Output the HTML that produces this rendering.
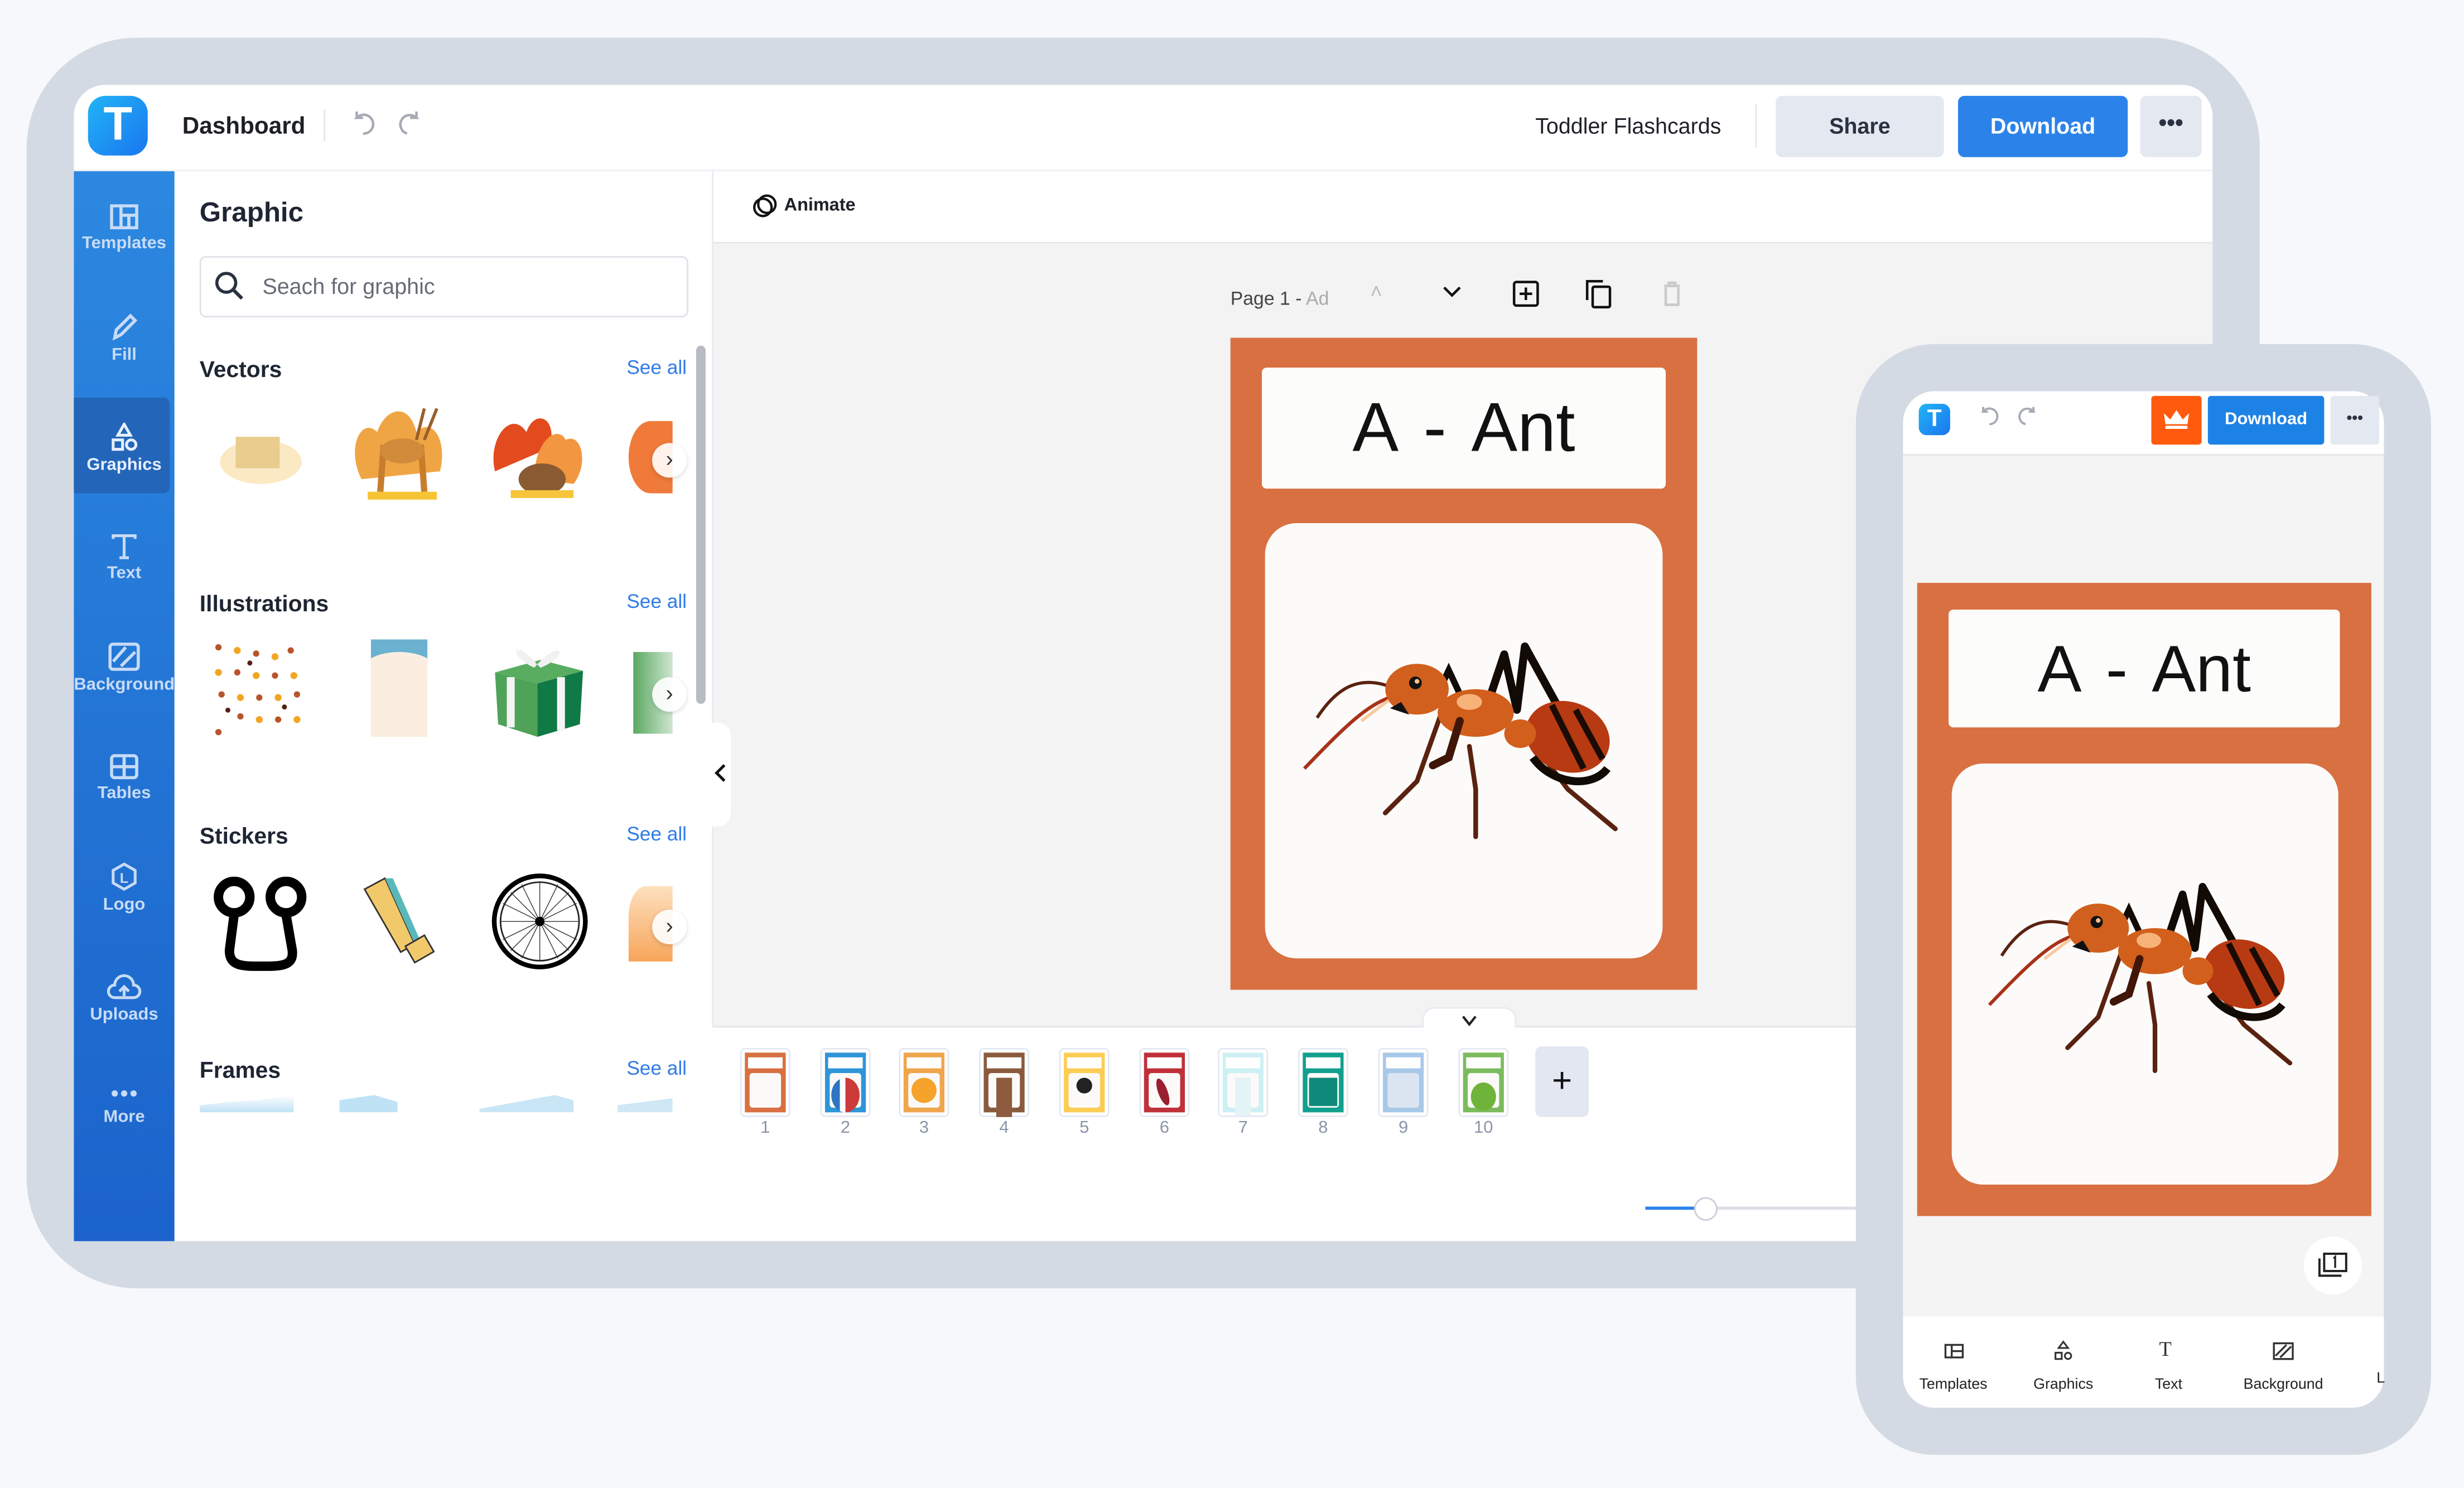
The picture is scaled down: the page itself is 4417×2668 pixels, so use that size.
<!DOCTYPE html>
<html><head><meta charset="utf-8"><style>
*{margin:0;padding:0;box-sizing:border-box}
html,body{width:4417px;height:2667px;overflow:hidden;background:#f6f8fb;font-family:"Liberation Sans",sans-serif}
#w{position:absolute;left:0;top:0;width:1568px;height:947px;transform:scale(2.817);transform-origin:0 0}
.a{position:absolute}
.sb{position:absolute;left:47px;width:64px;text-align:center;color:#c7dbf6;font-size:11px;font-weight:bold}
.sb svg{display:block;margin:0 auto 3px}
.h{position:absolute;left:127px;font-size:14.5px;font-weight:bold;color:#1e2533}
.see{position:absolute;right:1131px;font-size:12.5px;color:#2f7be8}
.arr{position:absolute;width:22px;height:22px;border-radius:50%;background:rgba(255,255,255,.9);box-shadow:0 1px 3px rgba(0,0,0,.15);font-size:14px;line-height:21px;text-align:center;color:#333}
.th{position:absolute;top:667px;width:32px;height:44px;border:1px solid #e3e8f2;border-radius:3px;padding:2px}
.th .c{width:100%;height:100%;position:relative}
.th .t{position:absolute;left:2px;right:2px;top:3px;height:7px;background:#fff;font-size:3px;text-align:center}
.th .i{position:absolute;left:3px;right:3px;top:13px;bottom:3px;background:#fbfaf8;border-radius:2px}
.num{position:absolute;top:712px;width:32px;text-align:center;font-size:11px;color:#8a94a8}
.pn{position:absolute;top:852px;text-align:center;font-size:9.5px;color:#222}
.ttl{text-align:center;color:#111;word-spacing:6px;font-family:"Liberation Sans",sans-serif}
</style></head><body><div id="w">
<svg width="0" height="0" style="position:absolute"><defs>
<g id="ant">
<path d="M62 32 C40 22 25 30 12 50" stroke="#5a2210" stroke-width="2" fill="none"/>
<path d="M62 36 C45 40 30 55 4 82" stroke="#a8321a" stroke-width="2.2" fill="none"/>
<path d="M62 36 C55 40 48 46 40 52" stroke="#f8c9a0" stroke-width="2" fill="none"/>
<path d="M90 48 L75 90 L55 110" stroke="#5a2210" stroke-width="3" fill="none" stroke-linecap="round"/>
<path d="M108 68 L112 95 L112 125" stroke="#5a2210" stroke-width="3" fill="none" stroke-linecap="round"/>
<path d="M145 62 L170 95 L200 120" stroke="#5a2210" stroke-width="3" fill="none" stroke-linecap="round"/>
<path d="M120 40 L130 10 L138 45 L143 5 L165 45" stroke="#120a05" stroke-width="5" fill="none" stroke-linejoin="round"/>
<path d="M88 35 L95 20 L102 35" stroke="#120a05" stroke-width="4" fill="none"/>
<ellipse cx="170" cy="62" rx="27" ry="22" fill="#b83a12" transform="rotate(20 170 62)"/>
<path d="M160 42 L180 82 M175 45 L192 76" stroke="#1a0b05" stroke-width="4"/>
<path d="M148 75 C160 92 185 95 195 82" stroke="#120a05" stroke-width="5" fill="none"/>
<ellipse cx="112" cy="47" rx="24" ry="15" fill="#d25f1c"/>
<ellipse cx="140" cy="60" rx="10" ry="9" fill="#d25f1c"/>
<ellipse cx="108" cy="40" rx="8" ry="5" fill="#f7b27a"/>
<ellipse cx="75" cy="32" rx="20" ry="16" fill="#d1601e"/>
<circle cx="74" cy="28" r="4" fill="#111"/><circle cx="75" cy="27" r="1.5" fill="#f6c08a"/>
<path d="M58 44 L65 40 L70 48 Z" fill="#111"/>
<path d="M102 52 L95 75 L85 80" stroke="#3f1608" stroke-width="5" fill="none" stroke-linecap="round"/>
</g>
</defs></svg>

<div class="a" style="left:17px;top:24px;width:1421px;height:796px;background:#d4dae4;border-radius:70px"></div>
<div class="a" style="left:47px;top:54px;width:1361px;height:736px;background:#fff;border-radius:20px 20px 0 0"></div>
<div class="a" style="left:56px;top:61px;width:38px;height:38px;border-radius:11px;background:linear-gradient(135deg,#22b4f5,#1a76ef);color:#fff;font-size:30px;font-weight:bold;text-align:center;line-height:38px">T</div>
<div class="a" style="left:116px;top:72px;font-size:15px;font-weight:bold;color:#1e2027">Dashboard</div>
<div class="a" style="left:206px;top:70px;width:1px;height:20px;background:#e3e6ec"></div>
<svg class="a" style="left:217px;top:70px" width="60" height="20"><path d="M14 15 A6 6 0 1 0 10 5 L14 5 M10 5 L10 1" stroke="#a6abb4" stroke-width="1.6" fill="none"/><path d="M42 15 A6 6 0 1 1 48 5 L44 5 M48 5 L48 1" stroke="#a6abb4" stroke-width="1.6" fill="none"/></svg>
<div class="a" style="left:977px;top:72px;font-size:14px;color:#1e2027">Toddler Flashcards</div>
<div class="a" style="left:1117px;top:66px;width:1px;height:28px;background:#e3e6ec"></div>
<div class="a" style="left:1130px;top:61px;width:107px;height:39px;border-radius:4px;background:#e3e8f1;color:#2a3140;font-size:14px;font-weight:bold;text-align:center;line-height:39px">Share</div>
<div class="a" style="left:1246px;top:61px;width:108px;height:39px;border-radius:4px;background:#2b83ea;color:#fff;font-size:14px;font-weight:bold;text-align:center;line-height:39px">Download</div>
<div class="a" style="left:1362px;top:61px;width:39px;height:39px;border-radius:4px;background:#e3e8f1;color:#2a3140;font-size:15px;font-weight:bold;text-align:center;line-height:36px">•••</div>
<div class="a" style="left:47px;top:108px;width:1361px;height:1px;background:#edf0f4"></div>

<div class="a" style="left:47px;top:109px;width:64px;height:681px;background:linear-gradient(#2c88e0,#1b63cb)"></div>
<div class="a" style="left:47px;top:253px;width:61px;height:61px;background:#2366b9;border-radius:0 4px 4px 0"></div>
<div class="sb" style="top:130px"><svg width="18" height="16"><rect x="1" y="1" width="16" height="14" fill="none" stroke="#c7dbf6" stroke-width="2"/><path d="M7 1V15M7 7H17M12 7V15" stroke="#c7dbf6" stroke-width="2"/></svg>Templates</div>
<div class="sb" style="top:199px"><svg width="18" height="18"><path d="M3 16 L4 11 L13 2 L16 5 L7 14 Z" fill="none" stroke="#c7dbf6" stroke-width="2"/></svg>Fill</div>
<div class="sb" style="top:269px;color:#e6efff"><svg width="18" height="18"><path d="M9 1 L13 8 H5 Z" fill="none" stroke="#e6efff" stroke-width="1.8"/><rect x="2" y="11" width="6" height="6" fill="none" stroke="#e6efff" stroke-width="1.8"/><circle cx="13.5" cy="14" r="3" fill="none" stroke="#e6efff" stroke-width="1.8"/></svg>Graphics</div>
<div class="sb" style="top:340px"><svg width="18" height="16"><path d="M2 3 V1 H16 V3 M9 1 V15 M6 15 H12" stroke="#c7dbf6" stroke-width="1.8" fill="none"/></svg>Text</div>
<div class="sb" style="top:409px"><svg width="20" height="18"><rect x="1" y="1" width="18" height="16" rx="2" fill="none" stroke="#c7dbf6" stroke-width="2"/><path d="M3 12 L11 3 M8 15 L17 6" stroke="#c7dbf6" stroke-width="2"/></svg>Background</div>
<div class="sb" style="top:480px"><svg width="18" height="16"><rect x="1" y="1" width="16" height="14" rx="2" fill="none" stroke="#c7dbf6" stroke-width="2"/><path d="M1 8 H17 M9 1 V15" stroke="#c7dbf6" stroke-width="2"/></svg>Tables</div>
<div class="sb" style="top:549px"><svg width="18" height="18"><path d="M9 1 L16 5 V13 L9 17 L2 13 V5 Z" fill="none" stroke="#c7dbf6" stroke-width="1.8"/><text x="9" y="13" font-size="9" text-anchor="middle" fill="#c7dbf6" font-weight="bold" font-family="Liberation Sans">L</text></svg>Logo</div>
<div class="sb" style="top:620px"><svg width="22" height="17"><path d="M5 15 A4 4 0 0 1 5 7 A6 6 0 0 1 17 7 A4 4 0 0 1 17 15 Z" fill="none" stroke="#c7dbf6" stroke-width="1.8"/><path d="M11 14 V8 M8 11 L11 8 L14 11" stroke="#c7dbf6" stroke-width="1.8" fill="none"/></svg>Uploads</div>
<div class="sb" style="top:690px"><svg width="18" height="12"><circle cx="3" cy="6" r="2" fill="#c7dbf6"/><circle cx="9" cy="6" r="2" fill="#c7dbf6"/><circle cx="15" cy="6" r="2" fill="#c7dbf6"/></svg>More</div>

<div class="a" style="left:453px;top:109px;width:1px;height:545px;background:#e8ebf0"></div>
<div class="a" style="left:127px;top:125px;font-size:17.5px;font-weight:bold;color:#1e2533">Graphic</div>
<div class="a" style="left:127px;top:163px;width:311px;height:39px;border:1px solid #dfe2e8;border-radius:4px"></div>
<svg class="a" style="left:136px;top:172px" width="20" height="20"><circle cx="8" cy="8" r="6" fill="none" stroke="#2a3140" stroke-width="2"/><path d="M12.5 12.5 L18 18" stroke="#2a3140" stroke-width="2.2"/></svg>
<div class="a" style="left:167px;top:174px;font-size:14px;color:#666b75">Seach for graphic</div>
<div class="a" style="left:443px;top:220px;width:6px;height:228px;border-radius:3px;background:#b8bbc3"></div>

<div class="h" style="top:228px">Vectors</div><div class="see" style="top:227px">See all</div>
<div class="a" style="left:140px;top:280px;width:52px;height:28px;border-radius:50%;background:#fbe9c4"></div>
<div class="a" style="left:150px;top:278px;width:28px;height:20px;background:#e8cd8e"></div>
<svg class="a" style="left:220px;top:255px" width="70" height="65"><path d="M10 50 C0 30 10 10 20 20 C25 5 40 0 45 20 C55 10 65 25 60 45 Z" fill="#f0a545"/><path d="M22 58 L24 30 L48 30 L50 58" stroke="#c77e2c" stroke-width="4" fill="none"/><ellipse cx="36" cy="32" rx="14" ry="8" fill="#d18b3b"/><path d="M45 25 L50 5 M50 25 L58 5" stroke="#9b5f2a" stroke-width="2"/><rect x="14" y="58" width="44" height="5" fill="#f7c436"/></svg>
<svg class="a" style="left:310px;top:260px" width="65" height="60"><path d="M5 40 C0 20 15 0 25 15 C30 0 45 5 40 25 Z" fill="#e34b1f"/><path d="M30 45 C30 20 45 10 50 20 C60 15 65 35 55 48 Z" fill="#f2963f"/><ellipse cx="35" cy="45" rx="15" ry="10" fill="#8a5a32"/><rect x="15" y="52" width="40" height="5" fill="#f6c53b"/></svg>
<div class="a" style="left:400px;top:268px;width:28px;height:46px;border-radius:50% 0 0 50%;background:#ef7a3a"></div>
<div class="arr" style="left:415px;top:282px">›</div>

<div class="h" style="top:377px">Illustrations</div><div class="see" style="top:376px">See all</div>
<svg class="a" style="left:133px;top:408px" width="64" height="60"><g fill="#b8542a"><circle cx="6" cy="4" r="2"/><circle cx="30" cy="8" r="2"/><circle cx="52" cy="6" r="2"/><circle cx="18" cy="20" r="2"/><circle cx="42" cy="22" r="2"/><circle cx="8" cy="34" r="2"/><circle cx="32" cy="36" r="2"/><circle cx="56" cy="34" r="2"/><circle cx="20" cy="48" r="2"/><circle cx="44" cy="50" r="2"/><circle cx="6" cy="58" r="2"/></g><g fill="#f2a522"><circle cx="18" cy="6" r="2.2"/><circle cx="42" cy="10" r="2.2"/><circle cx="6" cy="20" r="2.2"/><circle cx="30" cy="22" r="2.2"/><circle cx="54" cy="22" r="2.2"/><circle cx="20" cy="36" r="2.2"/><circle cx="44" cy="36" r="2.2"/><circle cx="32" cy="50" r="2.2"/><circle cx="56" cy="50" r="2.2"/></g><g fill="#5a1e14"><circle cx="26" cy="14" r="1.6"/><circle cx="48" cy="42" r="1.6"/><circle cx="12" cy="44" r="1.6"/></g></svg>
<div class="a" style="left:236px;top:407px;width:36px;height:62px;background:#fbeee0;overflow:hidden"><div style="height:14px;background:#6bb2d0"></div><div style="position:absolute;left:-6px;top:8px;width:48px;height:24px;border-radius:50%;background:#fbeee0"></div></div>
<svg class="a" style="left:312px;top:405px" width="62" height="65"><path d="M3 23 L30 30 L30 64 L5 56 Z" fill="#4ea358"/><path d="M30 30 L59 22 L57 56 L30 64 Z" fill="#0f7a45"/><path d="M3 23 L32 15 L59 22 L30 30 Z" fill="#58ad60"/><path d="M13 26 L13 58 M45 26 L45 60" stroke="#f4f4f4" stroke-width="5"/><path d="M30 18 C15 0 10 12 28 20 C45 0 52 12 32 20" fill="#f1f1f1"/></svg>
<div class="a" style="left:403px;top:415px;width:25px;height:52px;background:linear-gradient(90deg,#5aa862,#cfe6d1)"></div>
<div class="arr" style="left:415px;top:431px">›</div>

<div class="h" style="top:525px">Stickers</div><div class="see" style="top:524px">See all</div>
<svg class="a" style="left:134px;top:555px" width="64" height="64"><circle cx="15" cy="16" r="10" fill="none" stroke="#000" stroke-width="6"/><circle cx="48" cy="16" r="10" fill="none" stroke="#000" stroke-width="6"/><path d="M15 27 L12 50 C12 60 20 60 32 60 C45 60 53 60 52 50 L48 27" fill="none" stroke="#000" stroke-width="6"/></svg>
<svg class="a" style="left:230px;top:556px" width="55" height="62"><path d="M2 10 L15 3 L34 45 L25 50 Z" fill="#f2c96a" stroke="#333" stroke-width="1"/><path d="M15 3 L20 3 L38 44 L34 45 Z" fill="#5ab8b9"/><rect x="30" y="42" width="14" height="12" transform="rotate(-30 37 48)" fill="#f2c96a" stroke="#333" stroke-width="1"/></svg>
<svg class="a" style="left:312px;top:555px" width="63" height="63"><circle cx="31.5" cy="31.5" r="29" fill="#fff" stroke="#000" stroke-width="3"/><circle cx="31.5" cy="31.5" r="25" fill="none" stroke="#222" stroke-width="1"/><g stroke="#333" stroke-width=".5"><path d="M31.5 6V57M6 31.5H57M13 13L50 50M50 13L13 50M20 8L43 55M43 8L20 55M8 20L55 43M8 43L55 20"/></g><circle cx="31.5" cy="31.5" r="3" fill="#000"/></svg>
<div class="a" style="left:400px;top:564px;width:28px;height:48px;background:linear-gradient(#fde0bf,#f7a55a);border-radius:40% 0 0 0"></div>
<div class="arr" style="left:415px;top:579px">›</div>

<div class="h" style="top:674px">Frames</div><div class="see" style="top:673px">See all</div>
<div class="a" style="left:127px;top:697px;width:60px;height:11px;background:linear-gradient(#fff,#bfe2f5);clip-path:polygon(0 60%,30% 40%,60% 30%,100% 0,100% 100%,0 100%)"></div>
<div class="a" style="left:216px;top:697px;width:37px;height:11px;background:#bfe2f5;clip-path:polygon(0 30%,60% 0,100% 40%,100% 100%,0 100%)"></div>
<div class="a" style="left:305px;top:697px;width:60px;height:11px;background:#c8e6f6;clip-path:polygon(0 80%,40% 40%,80% 0,100% 30%,100% 100%,0 100%)"></div>
<div class="a" style="left:393px;top:699px;width:35px;height:9px;background:#cfe8f6;clip-path:polygon(0 50%,100% 0,100% 100%,0 100%)"></div>

<div class="a" style="left:454px;top:155px;width:954px;height:498px;background:#f3f3f3"></div>
<div class="a" style="left:454px;top:154px;width:954px;height:1px;background:#e6e6e6"></div>
<svg class="a" style="left:478px;top:123px" width="18" height="16"><circle cx="10" cy="7" r="5.5" fill="none" stroke="#111" stroke-width="1.5"/><circle cx="7.5" cy="9" r="5.5" fill="none" stroke="#111" stroke-width="1.5"/></svg>
<div class="a" style="left:499px;top:125px;font-size:11.5px;font-weight:bold;color:#1e2027">Animate</div>
<div class="a" style="left:783px;top:183px;font-size:12px;color:#444">Page 1 - <span style="color:#aaa">Ad</span></div>
<div class="a" style="left:872px;top:178px;font-size:13px;color:#bbb">˄</div>
<svg class="a" style="left:917px;top:181px" width="14" height="10"><path d="M2 2 L7 7 L12 2" stroke="#111" stroke-width="1.6" fill="none"/></svg>
<svg class="a" style="left:962px;top:178px" width="18" height="18"><rect x="1.5" y="1.5" width="15" height="15" rx="1.5" fill="none" stroke="#111" stroke-width="1.6"/><path d="M9 5V13M5 9H13" stroke="#111" stroke-width="1.6"/></svg>
<svg class="a" style="left:1008px;top:177px" width="18" height="20"><path d="M2 14 V2 H12" stroke="#111" stroke-width="1.6" fill="none"/><rect x="5.5" y="5.5" width="11" height="13" rx="1" fill="none" stroke="#111" stroke-width="1.6"/></svg>
<svg class="a" style="left:1057px;top:178px" width="14" height="18"><path d="M2 4H12M5 4V2H9V4M3 5V16H11V5" stroke="#c9c9c9" stroke-width="1.6" fill="none"/></svg>

<div class="a" style="left:783px;top:215px;width:297px;height:415px;background:#d87041"></div>
<div class="a ttl" style="left:803px;top:234px;width:257px;height:77px;background:#fcfcfb;border-radius:3px;font-size:44px;line-height:77px">A - Ant</div>
<div class="a" style="left:805px;top:333px;width:253px;height:277px;background:#fcfbf9;border-radius:20px"></div>
<svg class="a" style="left:826px;top:406px" width="212" height="130" viewBox="0 0 210 128"><use href="#ant"/></svg>

<div class="a" style="left:453px;top:460px;width:12px;height:66px;background:#fff;border-radius:0 8px 8px 0"></div>
<svg class="a" style="left:454px;top:486px" width="10" height="12"><path d="M7 1 L2 6 L7 11" stroke="#111" stroke-width="1.8" fill="none"/></svg>

<div class="a" style="left:454px;top:653px;width:954px;height:1px;background:#e3e5ea"></div>
<div class="a" style="left:905px;top:641px;width:60px;height:13px;background:#fff;border-radius:8px 8px 0 0;border:1px solid #e6eaf1;border-bottom:0"></div>
<svg class="a" style="left:930px;top:646px" width="10" height="8"><path d="M1 1 L5 6 L9 1" stroke="#222" stroke-width="1.5" fill="none"/></svg>

<div class="th" style="left:471px"><div class="c" style="background:#d87041"><div class="t"></div><div class="i"></div></div></div>
<div class="th" style="left:522px"><div class="c" style="background:#2e95d8"><div class="t"></div><div class="i"><div style="margin:3px auto;width:18px;height:22px;border-radius:50%;background:linear-gradient(90deg,#2d74c2 30%,#fff 30%,#fff 50%,#cc3a3a 50%)"></div></div></div></div>
<div class="th" style="left:572px"><div class="c" style="background:#f0a64c"><div class="t"></div><div class="i"><div style="margin:3px auto;width:16px;height:16px;border-radius:50%;background:#f5a32a"></div></div></div></div>
<div class="th" style="left:623px"><div class="c" style="background:#8b5a3e"><div class="t"></div><div class="i"><div style="margin:3px auto;width:10px;height:25px;background:#8d5b3d"></div></div></div></div>
<div class="th" style="left:674px"><div class="c" style="background:#fbcd55"><div class="t"></div><div class="i"><div style="margin:3px auto;width:10px;height:10px;border-radius:50%;background:#222"></div></div></div></div>
<div class="th" style="left:725px"><div class="c" style="background:#c0303a"><div class="t"></div><div class="i"><div style="margin:3px 0 0 6px;width:6px;height:18px;border-radius:50%;background:#9a2030;transform:rotate(-20deg)"></div></div></div></div>
<div class="th" style="left:775px"><div class="c" style="background:#cdf0f2"><div class="t"></div><div class="i"><div style="margin:3px auto;width:10px;height:24px;background:#e4f3f6"></div></div></div></div>
<div class="th" style="left:826px"><div class="c" style="background:#12a08e"><div class="t"></div><div class="i"><div style="margin:3px auto;width:18px;height:18px;background:#0f8a7a"></div></div></div></div>
<div class="th" style="left:877px"><div class="c" style="background:#a8c8e8"><div class="t"></div><div class="i" style="background:#dbe5f1"></div></div></div>
<div class="th" style="left:928px"><div class="c" style="background:#7cbb5d"><div class="t"></div><div class="i"><div style="margin:6px auto;width:16px;height:18px;border-radius:50%;background:#6fb33a"></div></div></div></div>
<div class="num" style="left:471px">1</div><div class="num" style="left:522px">2</div><div class="num" style="left:572px">3</div><div class="num" style="left:623px">4</div><div class="num" style="left:674px">5</div><div class="num" style="left:725px">6</div><div class="num" style="left:775px">7</div><div class="num" style="left:826px">8</div><div class="num" style="left:877px">9</div><div class="num" style="left:928px">10</div>
<div class="a" style="left:977px;top:666px;width:34px;height:45px;border-radius:4px;background:#e3e7f1;text-align:center;line-height:44px;font-size:22px;color:#111">+</div>

<div class="a" style="left:1047px;top:768px;width:40px;height:2px;background:#2b83ea"></div>
<div class="a" style="left:1087px;top:768px;width:100px;height:2px;background:#dcdfe5"></div>
<div class="a" style="left:1078px;top:762px;width:15px;height:15px;border-radius:50%;background:#fff;border:1px solid #ccd"></div>

<div class="a" style="left:1181px;top:219px;width:366px;height:707px;background:#d4dae4;border-radius:50px"></div>
<div class="a" style="left:1211px;top:249px;width:306px;height:647px;background:#f4f4f4;border-radius:20px;overflow:hidden">
 <div class="a" style="left:0;top:0;width:306px;height:41px;background:#fff;border-bottom:1px solid #e6e6e6"></div>
 <div class="a" style="left:0;top:589px;width:306px;height:58px;background:#fff"></div>
</div>
<div class="a" style="left:1221px;top:257px;width:20px;height:20px;border-radius:5px;background:linear-gradient(135deg,#22b4f5,#1a76ef);color:#fff;font-size:15px;font-weight:bold;text-align:center;line-height:20px">T</div>
<svg class="a" style="left:1254px;top:258px" width="50" height="16"><path d="M12 12 A5 5 0 1 0 8 4 L11 4 M8 4 L8 1" stroke="#a6abb4" stroke-width="1.4" fill="none"/><path d="M35 12 A5 5 0 1 1 40 4 L37 4 M40 4 L40 1" stroke="#a6abb4" stroke-width="1.4" fill="none"/></svg>
<div class="a" style="left:1369px;top:252px;width:32px;height:31px;background:#ff5a0d;border-radius:2px"></div>
<svg class="a" style="left:1376px;top:259px" width="18" height="14"><path d="M1 4 L5 8 L9 2 L13 8 L17 4 L16 11 H2 Z" fill="#fff"/><rect x="2" y="12" width="14" height="2" fill="#fff"/></svg>
<div class="a" style="left:1405px;top:252px;width:74px;height:31px;background:#1d82e6;border-radius:2px;color:#fff;font-size:11px;font-weight:bold;text-align:center;line-height:31px">Download</div>
<div class="a" style="left:1483px;top:252px;width:31px;height:31px;background:#e3e8f1;border-radius:2px;text-align:center;line-height:29px;font-size:10px;color:#2a3140;font-weight:bold">•••</div>
<div class="a" style="left:1220px;top:371px;width:289px;height:403px;background:#d87041"></div>
<div class="a ttl" style="left:1240px;top:388px;width:249px;height:75px;background:#fcfcfb;border-radius:3px;font-size:42px;line-height:75px">A - Ant</div>
<div class="a" style="left:1242px;top:486px;width:246px;height:268px;background:#fcfbf9;border-radius:20px"></div>
<svg class="a" style="left:1262px;top:559px" width="205" height="126" viewBox="0 0 210 128"><use href="#ant"/></svg>
<div class="a" style="left:1466px;top:787px;width:37px;height:37px;border-radius:50%;background:#fff"></div>
<svg class="a" style="left:1474px;top:796px" width="22" height="18"><path d="M2 5 V16 H16" stroke="#222" stroke-width="1.4" fill="none"/><rect x="5" y="2" width="14" height="11" fill="none" stroke="#222" stroke-width="1.4"/><path d="M11 5 L12 4 V11" stroke="#222" stroke-width="1.2" fill="none"/></svg>
<svg class="a" style="left:1237px;top:855px" width="13" height="10"><rect x="1" y="1" width="11" height="8" fill="none" stroke="#333" stroke-width="1.2"/><path d="M5 1V9M5 5H12" stroke="#333" stroke-width="1.2"/></svg>
<svg class="a" style="left:1306px;top:853px" width="14" height="13"><path d="M7 1 L10 5 H4 Z M2 8 H6 V12 H2 Z" fill="none" stroke="#333" stroke-width="1.1"/><circle cx="10" cy="10" r="2" fill="none" stroke="#333" stroke-width="1.1"/></svg>
<div class="a" style="left:1374px;top:851px;font-size:13px;color:#333;font-family:'Liberation Serif',serif">T</div>
<svg class="a" style="left:1446px;top:854px" width="14" height="12"><rect x="1" y="1" width="12" height="10" fill="none" stroke="#333" stroke-width="1.2"/><path d="M2 9 L9 2 M5 10 L12 3" stroke="#333" stroke-width="1.2"/></svg>
<div class="pn" style="left:1216px;top:876px;width:54px">Templates</div>
<div class="pn" style="left:1288px;top:876px;width:50px">Graphics</div>
<div class="pn" style="left:1360px;top:876px;width:40px">Text</div>
<div class="pn" style="left:1423px;top:876px;width:60px">Background</div>
<div class="pn" style="left:1512px;top:872px;width:6px;overflow:hidden">L</div>
</div></body></html>
